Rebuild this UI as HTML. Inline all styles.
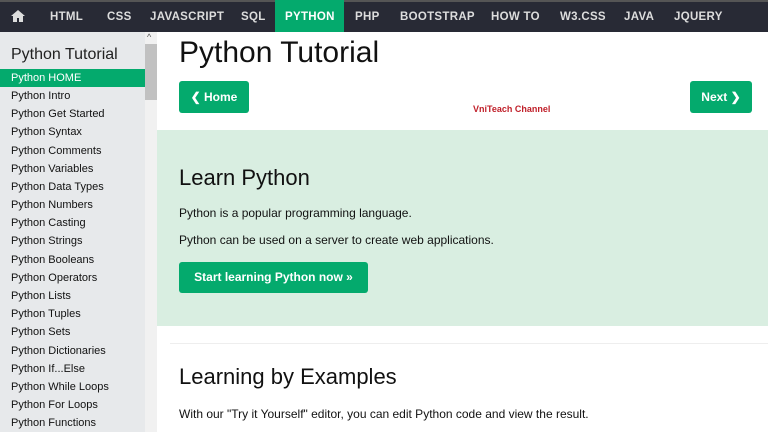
<!DOCTYPE html>
<html><head><style>
*{margin:0;padding:0;box-sizing:border-box}
body{width:768px;height:432px;overflow:hidden;background:#fff;font-family:"Liberation Sans",sans-serif;position:relative}
.nav{position:absolute;left:0;top:0;width:768px;height:32px;background:#282a35;border-top:2px solid #555}
.nav span{position:absolute;top:9px;color:#ddd;font-weight:bold;font-size:11.5px;letter-spacing:.3px}
.nav .act{background:#04aa6d;color:#fff;top:-2px;height:32px;padding-top:11px;padding-left:10px;width:69px}
.side{position:absolute;left:0;top:32px;width:145px;height:400px;background:#e7e9eb}
.side h2{font-weight:normal;font-size:16px;color:#222;position:absolute;left:11px;top:14px}
.side div{position:absolute;left:0;width:145px;height:18px;font-size:11px;padding-left:11px;line-height:19px;color:#111}
.scroll{position:absolute;left:145px;top:32px;width:12px;height:400px;background:#f1f1f1}
.thumb{position:absolute;left:145px;top:44px;width:12px;height:56px;background:#c1c1c1}
.btn{position:absolute;background:#04aa6d;color:#fff;font-weight:bold;font-size:12px;border-radius:3px;text-align:center}
</style></head><body>
<div class="nav">
<svg style="position:absolute;left:10px;top:7px" width="16" height="14" viewBox="0 0 16 14"><path d="M8 1L1 7h2v6h4v-4h2v4h4V7h2z" fill="#ddd"/></svg>
<span style="left:50px">HTML</span><span style="left:107px">CSS</span><span style="left:150px">JAVASCRIPT</span><span style="left:241px">SQL</span>
<span class="act" style="left:275px">PYTHON</span><span style="left:355px">PHP</span><span style="left:400px">BOOTSTRAP</span><span style="left:491px">HOW TO</span><span style="left:560px">W3.CSS</span><span style="left:624px">JAVA</span><span style="left:674px">JQUERY</span>
</div>
<div class="side"><h2>Python Tutorial</h2>
<div style="top:37px;background:#04aa6d;color:#fff">Python HOME</div>
<div style="top:55px">Python Intro</div><div style="top:73px">Python Get Started</div><div style="top:91px">Python Syntax</div><div style="top:110px">Python Comments</div><div style="top:128px">Python Variables</div><div style="top:146px">Python Data Types</div><div style="top:164px">Python Numbers</div><div style="top:182px">Python Casting</div><div style="top:200px">Python Strings</div><div style="top:219px">Python Booleans</div><div style="top:237px">Python Operators</div><div style="top:255px">Python Lists</div><div style="top:273px">Python Tuples</div><div style="top:291px">Python Sets</div><div style="top:310px">Python Dictionaries</div><div style="top:328px">Python If...Else</div><div style="top:346px">Python While Loops</div><div style="top:364px">Python For Loops</div><div style="top:382px">Python Functions</div>
</div>
<div class="scroll"></div><div class="thumb"></div>
<div style="position:absolute;left:147px;top:32px;font-size:9px;color:#555">^</div>
<div style="position:absolute;left:179px;top:36px;font-size:30px;color:#111">Python Tutorial</div>
<div class="btn" style="left:179px;top:81px;width:70px;height:32px;line-height:32px">❮ Home</div>
<div class="btn" style="left:690px;top:81px;width:62px;height:32px;line-height:32px">Next ❯</div>
<div style="position:absolute;left:473px;top:104px;font-size:9px;font-weight:bold;color:#c0202a">VniTeach Channel</div>
<div style="position:absolute;left:157px;top:130px;width:611px;height:196px;background:#d9eee1"></div>
<div style="position:absolute;left:179px;top:165px;font-size:22px;color:#111">Learn Python</div>
<div style="position:absolute;left:179px;top:206px;font-size:12px;color:#111">Python is a popular programming language.</div>
<div style="position:absolute;left:179px;top:233px;font-size:12px;color:#111">Python can be used on a server to create web applications.</div>
<div class="btn" style="left:179px;top:262px;width:189px;height:31px;line-height:31px">Start learning Python now »</div>
<div style="position:absolute;left:170px;top:343px;width:598px;height:1px;background:#eee"></div>
<div style="position:absolute;left:179px;top:364px;font-size:22px;color:#111">Learning by Examples</div>
<div style="position:absolute;left:179px;top:407px;font-size:12px;color:#111">With our "Try it Yourself" editor, you can edit Python code and view the result.</div>
</body></html>
